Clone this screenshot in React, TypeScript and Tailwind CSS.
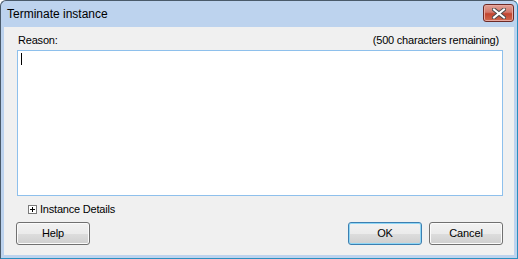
import React from 'react';

// Win7 basic-theme style push button
function Button({ label, isDefault = false }: { label: string; isDefault?: boolean }) {
  return (
    <button
      className={
        'w-[74px] h-[23px] rounded-[3px] border text-[11px] tracking-[-0.1px] text-black leading-none ' +
        (isDefault
          ? 'border-[#3c7fb1] shadow-[inset_0_0_0_1px_#8fd6f5]'
          : 'border-[#707070] shadow-[inset_0_0_0_1px_#fbfbfb]')
      }
      style={{
        background: 'linear-gradient(to bottom, #f2f2f2 0%, #ebebeb 50%, #dddddd 51%, #cfcfcf 100%)',
      }}
    >
      {label}
    </button>
  );
}

function CloseButton() {
  return (
    <div
      className="w-[31px] h-[18px] rounded-[3px] border border-[#6d2a26] flex items-center justify-center shadow-[inset_0_0_0_1px_#e8a89f]"
      style={{ background: 'linear-gradient(to bottom, #e0a196 0%, #d3796c 45%, #c2442f 55%, #d06a4f 100%)' }}
    >
      <svg width="14" height="11" viewBox="0 0 14 11">
        <path d="M2 1.5 L12 9.5 M12 1.5 L2 9.5" stroke="#4a4a4a" strokeWidth="4" strokeLinecap="square" />
        <path d="M2 1.5 L12 9.5 M12 1.5 L2 9.5" stroke="#ffffff" strokeWidth="2" strokeLinecap="square" />
      </svg>
    </div>
  );
}

export default function App() {
  return (
    <div className="w-[518px] h-[259px] bg-white" style={{ fontFamily: '"Liberation Sans", Arial, sans-serif' }}>
      <div className="w-[518px] h-[259px] flex flex-col border border-[#4a5a6a] border-r-[#2a8fc0] border-b-[#2a8fc0] rounded-t-[6px] bg-[#bdd3ee]">
        {/* title bar */}
        <div className="h-[26px] flex items-center justify-between pl-[6px] pr-[3px]">
          <span className="text-[12px] text-black">Terminate instance</span>
          <div className="mt-[-2px]">
            <CloseButton />
          </div>
        </div>

        {/* client area */}
        <div className="flex-1 mx-[3px] mb-[3px] bg-[#f0f0f0] flex flex-col">
          <div className="flex justify-between items-center h-[15px] mt-[6px] pl-[14px] pr-[15px] text-[11px] tracking-[-0.2px] text-black">
            <span>Reason:</span>
            <span>(500 characters remaining)</span>
          </div>

          <div className="mt-[2px] ml-[13px] mr-[11px] h-[146px] bg-white border border-[#8ec0ec] pl-[3px] pt-[2px]">
            <div className="w-px h-[12px] bg-black" />
          </div>

          <div className="flex items-center h-[15px] mt-[6px] pl-[24px] text-[11px] tracking-[-0.2px] text-black">
            <div className="w-[9px] h-[9px] border border-[#7a7a7a] bg-white flex items-center justify-center mr-[3px]">
              <svg width="7" height="7" viewBox="0 0 7 7">
                <path d="M1 3.5 H6 M3.5 1 V6" stroke="#000" strokeWidth="1" />
              </svg>
            </div>
            <span>Instance Details</span>
          </div>

          <div className="flex items-center mt-[5px] pl-[12px] pr-[11px]">
            <Button label="Help" />
            <div className="flex-1" />
            <Button label="OK" isDefault />
            <div className="w-[7px]" />
            <Button label="Cancel" />
          </div>
        </div>
      </div>
    </div>
  );
}
